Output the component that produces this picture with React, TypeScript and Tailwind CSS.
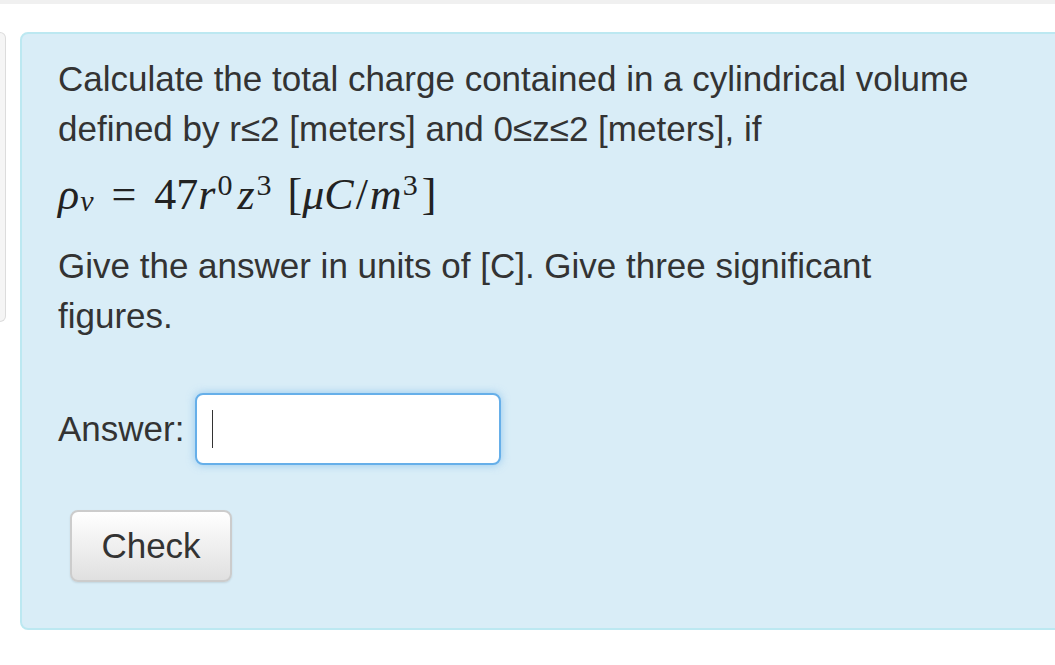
export default function App() {
  const serif = { fontFamily: '"Liberation Serif", "DejaVu Serif", serif' };
  return (
    <div className="w-[1055px] h-[665px] bg-white overflow-hidden relative" style={{ fontFamily: '"Liberation Sans", Arial, sans-serif' }}>
      <div className="h-[4px] bg-[#f0f0f0]" />
      <div className="flex mt-[28px]">
        <div className="w-[6px] h-[290px] bg-[#f5f5f5] border border-[#dcdcdc] border-l-0 rounded-r-[6px] shrink-0" />
        <div className="ml-[14px] w-[1050px] h-[598px] bg-[#d9edf7] border-2 border-[#bce8f1] rounded-[8px] pl-[36px] pt-[20px] text-[#333] shrink-0">
          <div className="w-[960px] text-[35px] leading-[50px]">
            Calculate the total charge contained in a cylindrical volume defined by r≤2 [meters] and 0≤z≤2 [meters], if
          </div>
          <div className="mt-[15px] h-[52px] flex items-center text-[44px] leading-none text-[#222]" style={serif}>
            <i>ρ</i><sub className="text-[30px] italic relative top-[6px] ml-[1px]">v</sub>
            <span className="mx-[18px]">=</span>
            <span>47</span><i>r</i><sup className="text-[30px] relative -top-[10px] ml-[2px]">0</sup>
            <i className="ml-[5px]">z</i><sup className="text-[30px] relative -top-[10px] ml-[2px]">3</sup>
            <span className="ml-[16px]">[</span><i>μC</i><span className="mx-[2px]">/</span><i>m</i><sup className="text-[30px] relative -top-[10px] ml-[1px]">3</sup><span className="ml-[4px]">]</span>
          </div>
          <div className="mt-[20px] w-[880px] text-[35px] leading-[50px]">
            Give the answer in units of [C]. Give three significant figures.
          </div>
          <div className="mt-[52px] flex items-center">
            <span className="text-[35px]">Answer:</span>
            <div className="ml-[11px] w-[306px] h-[72px] bg-white border-2 border-[#66afe9] rounded-[8px] shadow-[0_0_8px_rgba(102,175,233,0.6)] flex items-center pl-[15px]">
              <div className="w-[1px] h-[38px] bg-[#333]" />
            </div>
          </div>
          <button className="mt-[45px] ml-[12px] w-[162px] h-[72px] rounded-[8px] border-2 border-[#ccc] bg-gradient-to-b from-white to-[#e0e0e0] text-[35px] text-[#333] shadow-[0_1px_2px_rgba(0,0,0,0.1)]">
            Check
          </button>
        </div>
      </div>
    </div>
  );
}
